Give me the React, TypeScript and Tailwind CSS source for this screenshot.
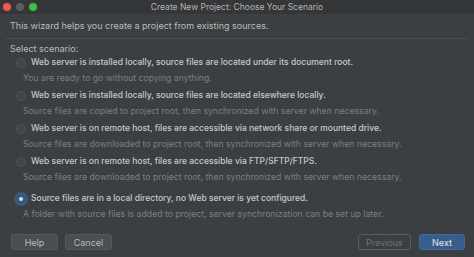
const options = [
  {
    title: "Web server is installed locally, source files are located under its document root.",
    hint: "You are ready to go without copying anything.",
  },
  {
    title: "Web server is installed locally, source files are located elsewhere locally.",
    hint: "Source files are copied to project root, then synchronized with server when necessary.",
  },
  {
    title: "Web server is on remote host, files are accessible via network share or mounted drive.",
    hint: "Source files are downloaded to project root, then synchronized with server when necessary.",
  },
  {
    title: "Web server is on remote host, files are accessible via FTP/SFTP/FTPS.",
    hint: "Source files are downloaded to project root, then synchronized with server when necessary.",
  },
  {
    title: "Source files are in a local directory, no Web server is yet configured.",
    hint: "A folder with source files is added to project, server synchronization can be set up later.",
  },
];

function Radio({ checked }: { checked: boolean }) {
  if (checked) {
    return (
      <div className="w-[10px] h-[10px] rounded-full bg-[#2f5a88] ring-2 ring-[#3d6a99]/60 flex items-center justify-center shrink-0">
        <div className="w-[4px] h-[4px] rounded-full bg-[#dcdcdc]" />
      </div>
    );
  }
  return <div className="w-[10px] h-[10px] rounded-full bg-[#434648] border border-[#505355] shrink-0" />;
}

export default function App() {
  const selected = 4;

  return (
    <div
      className="w-[474px] h-[257px] bg-[#3c3f41] flex flex-col text-[9px] text-[#bbbbbb] overflow-hidden"
      style={{ fontFamily: "Inter, 'Liberation Sans', sans-serif" }}
    >
      <div className="h-[14px] bg-[#353638] flex items-center relative shrink-0">
        <div className="flex items-center gap-[5px] pl-[3px]">
          <div className="w-[8px] h-[8px] rounded-full bg-[#f0584f]" />
          <div className="w-[8px] h-[8px] rounded-full bg-[#5c5d5f]" />
          <div className="w-[8px] h-[8px] rounded-full bg-[#3dbe45]" />
        </div>
        <div className="absolute inset-0 flex items-center justify-center text-[#b4b4b4] text-[8.5px]">
          Create New Project: Choose Your Scenario
        </div>
      </div>

      <div className="px-[10px] pt-[6px]">
        <div className="h-[12px] leading-[12px]">This wizard helps you create a project from existing sources.</div>
      </div>
      <div className="mx-[5px] mt-[6px] h-px bg-[#4a4d4f]" />

      <div className="px-[10px] pt-[4px]">
        <div className="h-[12px] leading-[12px]">Select scenario:</div>
        <div className="flex flex-col gap-[2px]">
          {options.map((o, i) => (
            <div key={i} className={i === selected ? "mt-[4px]" : ""}>
              <div className="flex items-center gap-[5px] pl-[6px] h-[15px]">
                <Radio checked={i === selected} />
                <span className="font-medium text-[8.5px] text-[#c8c8c8] whitespace-nowrap">{o.title}</span>
              </div>
              <div className="pl-[13px] h-[16px] leading-[16px] text-[8.7px] text-[#7c7e80] whitespace-nowrap">
                {o.hint}
              </div>
            </div>
          ))}
        </div>
      </div>

      <div className="mt-auto flex items-center justify-between pl-[11px] pr-[9px] pb-[7px]">
        <div className="flex gap-[7px]">
          <button className="w-[47px] h-[16px] rounded-[3px] bg-[#4b4e50] border border-[#56595b] text-[#bbbbbb] text-[9px] leading-none">
            Help
          </button>
          <button className="w-[47px] h-[16px] rounded-[3px] bg-[#4b4e50] border border-[#56595b] text-[#bbbbbb] text-[9px] leading-none">
            Cancel
          </button>
        </div>
        <div className="flex gap-[8px]">
          <button className="w-[53px] h-[16px] rounded-[3px] bg-[#3c3f41] border border-[#5a5d5f] text-[#6f7173] text-[9px] leading-none">
            Previous
          </button>
          <button className="w-[46px] h-[16px] rounded-[3px] bg-[#365d8c] border border-[#3f6a9a] text-[#e6e6e6] text-[9px] leading-none">
            Next
          </button>
        </div>
      </div>
    </div>
  );
}
